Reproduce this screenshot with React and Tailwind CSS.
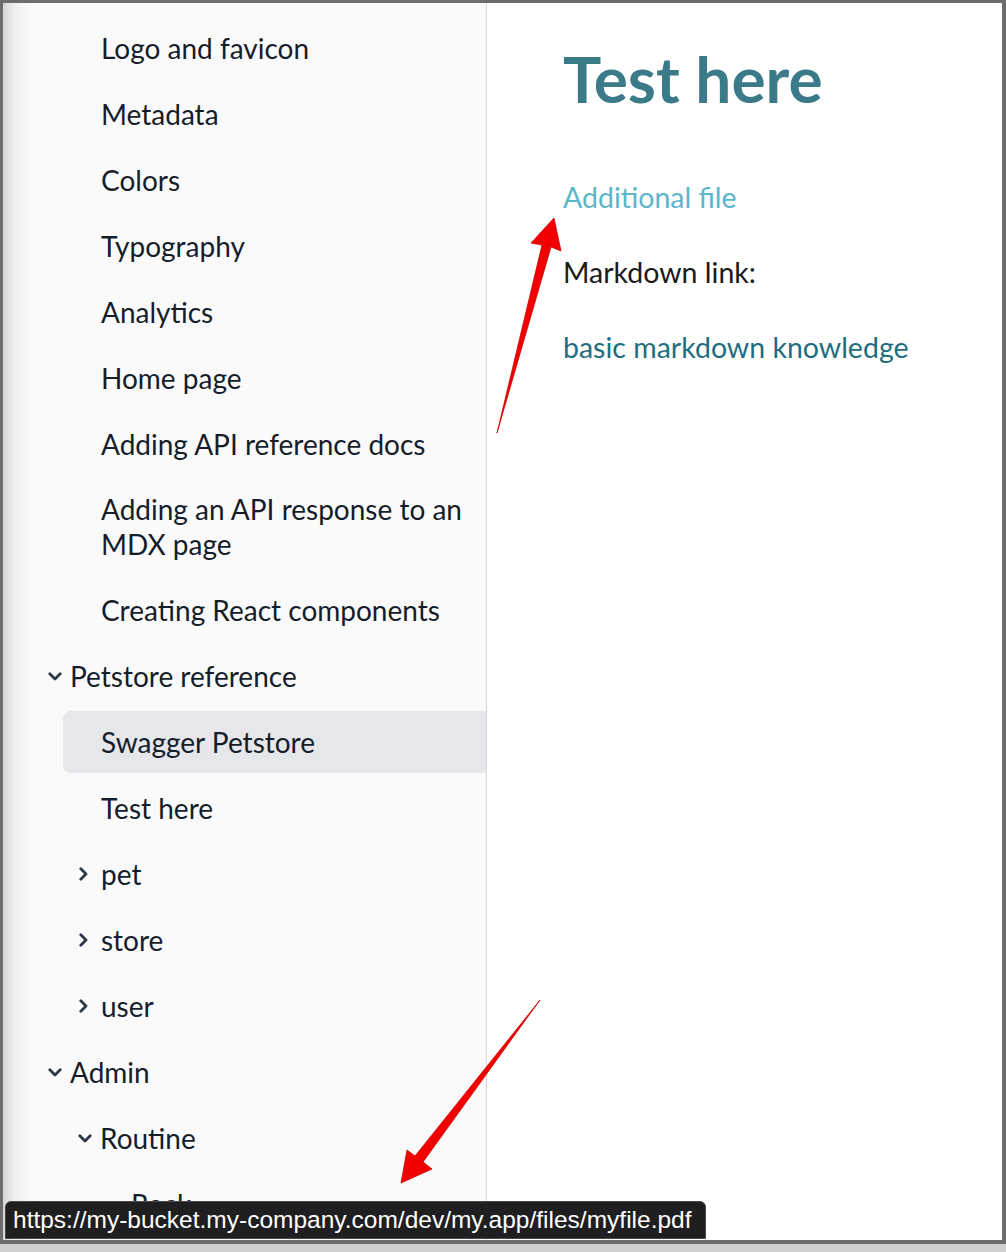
import React from "react";

const font = { fontFamily: "Lato, 'Noto Sans', sans-serif" };

function ChevDown() {
  return (
    <svg width="14" height="9" viewBox="0 0 14 9" className="shrink-0">
      <polyline points="1.8,1.8 7,7 12.2,1.8" fill="none" stroke="#2d3748" strokeWidth="2.8" strokeLinecap="round" strokeLinejoin="round" />
    </svg>
  );
}
function ChevRight() {
  return (
    <svg width="9" height="14" viewBox="0 0 9 14" className="shrink-0">
      <polyline points="1.8,1.8 7,7 1.8,12.2" fill="none" stroke="#2d3748" strokeWidth="2.8" strokeLinecap="round" strokeLinejoin="round" />
    </svg>
  );
}

function Item({ children, active }) {
  return (
    <div className={"ml-[60px] flex items-center min-h-[62px] my-[2px] py-[13px] pl-[38px] rounded-l-[8px] " + (active ? "bg-[#e5e7eb]" : "")}>
      <span className="leading-[35px]">{children}</span>
    </div>
  );
}

export default function App() {
  return (
    <div className="relative w-[1006px] h-[1252px] overflow-hidden bg-[#6d6d6d]" style={font}>
      <div className="absolute left-0 right-0 bottom-0 h-[8px] bg-[#cfcfcf]" />
      <div className="absolute left-[3px] top-[3px] w-[999px] h-[1237px] flex overflow-hidden">
        {/* Sidebar */}
        <div className="w-[484px] shrink-0 h-full flex flex-col border-r border-[#d6d6d6] bg-[linear-gradient(90deg,#d6d6d6_0px,#f0f0f0_12px,#fafafa_30px)] pt-[12px] text-[28px] text-[#161d2a]">
          <Item>Logo and favicon</Item>
          <Item>Metadata</Item>
          <Item>Colors</Item>
          <Item>Typography</Item>
          <Item>Analytics</Item>
          <Item>Home page</Item>
          <Item>Adding API reference docs</Item>
          <Item>Adding an API response to an<br />MDX page</Item>
          <Item>Creating React components</Item>
          <div className="ml-[45px] flex items-center h-[62px] my-[2px] gap-[8px] shrink-0">
            <ChevDown />
            <span>Petstore reference</span>
          </div>
          <Item active>Swagger Petstore</Item>
          <Item>Test here</Item>
          {["pet", "store", "user"].map((t) => (
            <div key={t} className="ml-[76px] flex items-center h-[62px] my-[2px] gap-[13px] shrink-0">
              <ChevRight />
              <span>{t}</span>
            </div>
          ))}
          <div className="ml-[45px] flex items-center h-[62px] my-[2px] gap-[8px] shrink-0">
            <ChevDown />
            <span>Admin</span>
          </div>
          <div className="ml-[75px] flex items-center h-[62px] my-[2px] gap-[8px] shrink-0">
            <ChevDown />
            <span>Routine</span>
          </div>
          <div className="ml-[128px] flex items-center h-[62px] my-[2px] shrink-0">
            <span>Rock</span>
          </div>
        </div>
        {/* Main */}
        <div className="flex-1 bg-white pl-[76px] pt-[38px]">
          <h1 className="text-[64px] leading-[1.2] font-bold text-[#3b7a89]">Test here</h1>
          <p className="mt-[62px] text-[28.5px] leading-[35px] text-[#5bb6cc]">Additional file</p>
          <p className="mt-[40px] text-[28.5px] leading-[35px] text-[#1a1a1a]">Markdown link:</p>
          <p className="mt-[40px] text-[28.5px] leading-[35px] text-[#1f6e80]">basic markdown knowledge</p>
        </div>
      </div>

      {/* Arrows */}
      <svg className="absolute left-0 top-0 pointer-events-none" width="1006" height="1252">
        <polygon points="554,218 561,251 551,247 497,433 542,245 531,243" fill="#f20000" stroke="#d00000" strokeWidth="0.8" strokeLinejoin="round" />
        <polygon points="401,1183 407,1150 415,1156 540,1000 423,1162 432,1169" fill="#f20000" stroke="#d00000" strokeWidth="0.8" strokeLinejoin="round" />
      </svg>

      {/* Tooltip */}
      <div className="absolute left-[5px] top-[1201px] w-[701px] h-[38px] rounded-t-[6px] bg-[#1f1f21] border border-[#4a4a4a] flex items-center pl-[7px] text-white text-[24.5px]" style={{ fontFamily: "'Liberation Sans', Arial, sans-serif" }}>
        https://my-bucket.my-company.com/dev/my.app/files/myfile.pdf
      </div>
    </div>
  );
}
